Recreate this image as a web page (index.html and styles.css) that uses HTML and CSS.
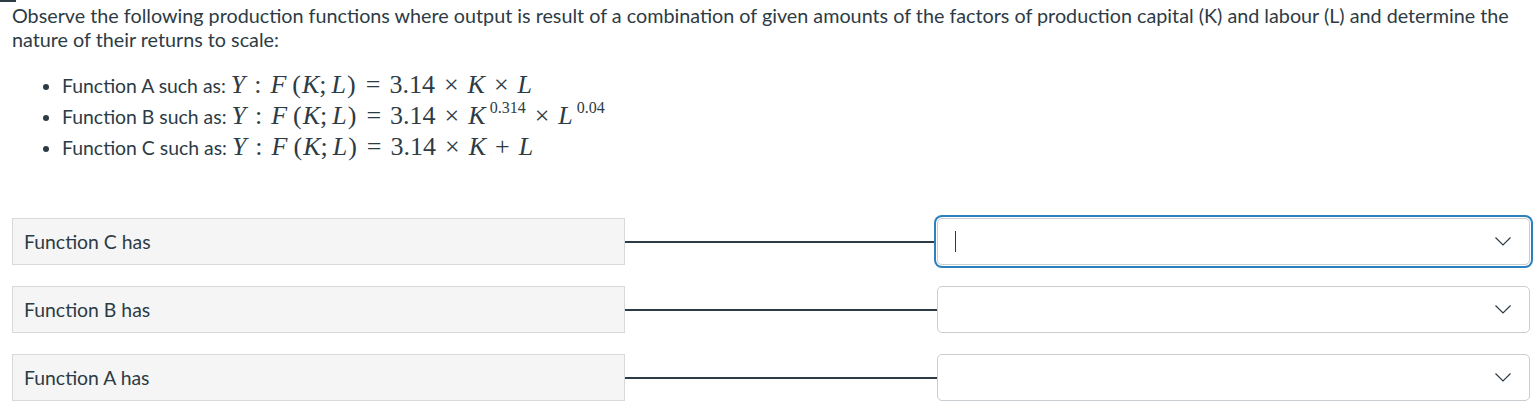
FILE: index.html
```html
<!DOCTYPE html>
<html>
<head>
<meta charset="utf-8">
<link rel="stylesheet" href="styles.css">
</head>
<body>
<div class="corner-mark"></div>
<div class="question">
  <p class="intro">Observe the following production functions where output is result of a combination of given amounts of the factors of production capital (K) and labour (L) and determine the nature of their returns to scale:</p>
  <ul class="funcs">
    <li>Function A such as: <span class="math"><i>Y</i><span class="rel">:</span><i>F</i><span class="paren open">(</span><i>K</i>;<span class="sp"></span><i>L</i><span class="paren">)</span><span class="rel">=</span>3.14<span class="bin">×</span><i>K</i><span class="bin">×</span><i>L</i></span></li>
    <li>Function B such as: <span class="math"><i>Y</i><span class="rel">:</span><i>F</i><span class="paren open">(</span><i>K</i>;<span class="sp"></span><i>L</i><span class="paren">)</span><span class="rel">=</span>3.14<span class="bin">×</span><i>K</i><sup>0.314</sup><span class="bin">×</span><i>L</i><sup>0.04</sup></span></li>
    <li>Function C such as: <span class="math"><i>Y</i><span class="rel">:</span><i>F</i><span class="paren open">(</span><i>K</i>;<span class="sp"></span><i>L</i><span class="paren">)</span><span class="rel">=</span>3.14<span class="bin">×</span><i>K</i><span class="bin">+</span><i>L</i></span></li>
  </ul>
  <div class="matches">
    <div class="match-row">
      <div class="prompt">Function C has</div>
      <div class="connector"></div>
      <div class="select focused"><span class="caret"></span><svg class="chev" viewBox="0 0 16 9" width="16" height="9"><polyline points="0.5,0.5 8,8 15.5,0.5" fill="none" stroke="#2d3b45" stroke-width="1.2"/></svg></div>
    </div>
    <div class="match-row">
      <div class="prompt">Function B has</div>
      <div class="connector"></div>
      <div class="select"><svg class="chev" viewBox="0 0 16 9" width="16" height="9"><polyline points="0.5,0.5 8,8 15.5,0.5" fill="none" stroke="#2d3b45" stroke-width="1.2"/></svg></div>
    </div>
    <div class="match-row">
      <div class="prompt">Function A has</div>
      <div class="connector"></div>
      <div class="select"><svg class="chev" viewBox="0 0 16 9" width="16" height="9"><polyline points="0.5,0.5 8,8 15.5,0.5" fill="none" stroke="#2d3b45" stroke-width="1.2"/></svg></div>
    </div>
  </div>
</div>
</body>
</html>
```
FILE: styles.css
```css
html, body {
  margin: 0;
  padding: 0;
  background: #ffffff;
}
body {
  font-family: Lato, "Open Sans", sans-serif;
  color: #2d3b45;
  font-size: 19.7px;
  position: relative;
}
.corner-mark {
  position: absolute;
  left: 0;
  top: 0;
  width: 16px;
  height: 2px;
  background: #2d3b45;
}
.question {
  padding: 4px 9px 0 12px;
}
.intro {
  margin: 0;
  line-height: 24px;
  font-size: 19.75px;
}
.funcs {
  margin: 17px 0 0 0;
  padding-left: 50px;
  list-style: disc;
}
.funcs li {
  line-height: 31px;
  height: 31px;
  font-size: 19.4px;
}
.math {
  font-family: "Liberation Serif", "Times New Roman", serif;
  font-size: 26px;
  white-space: nowrap;
}
.math i {
  font-style: italic;
}
.math .rel {
  padding: 0 9px;
}
.math .bin {
  padding: 0 9px;
}
.math .paren {
  padding: 0 1px;
}
.math .paren.open {
  padding-left: 6px;
}
.math .sp {
  display: inline-block;
  width: 5px;
}
.math sup {
  font-size: 16px;
  line-height: 0;
  vertical-align: 11px;
  margin-left: 4px;
}
.matches {
  margin-top: 56px;
  display: flex;
  flex-direction: column;
  gap: 21px;
}
.match-row {
  display: grid;
  grid-template-columns: 613px 312px 1fr;
  align-items: center;
  height: 47px;
}
.prompt {
  box-sizing: border-box;
  height: 47px;
  background: #f5f5f5;
  border: 1px solid #d7dadd;
  display: flex;
  align-items: center;
  padding-left: 11px;
  font-size: 19.4px;
}
.connector {
  height: 2px;
  background: #2d3b45;
}
.select {
  box-sizing: border-box;
  height: 47px;
  border: 1px solid #c7cdd1;
  border-radius: 5px;
  background: #fff;
  display: flex;
  align-items: center;
  justify-content: space-between;
  padding: 0 18px 0 17px;
}
.select .chev {
  margin-left: auto;
}
.select.focused {
  box-shadow: 0 0 0 1px #ffffff, 0 0 0 3px #2b80bd;
}
.caret {
  width: 1px;
  height: 21px;
  background: #2d3b45;
}
```
